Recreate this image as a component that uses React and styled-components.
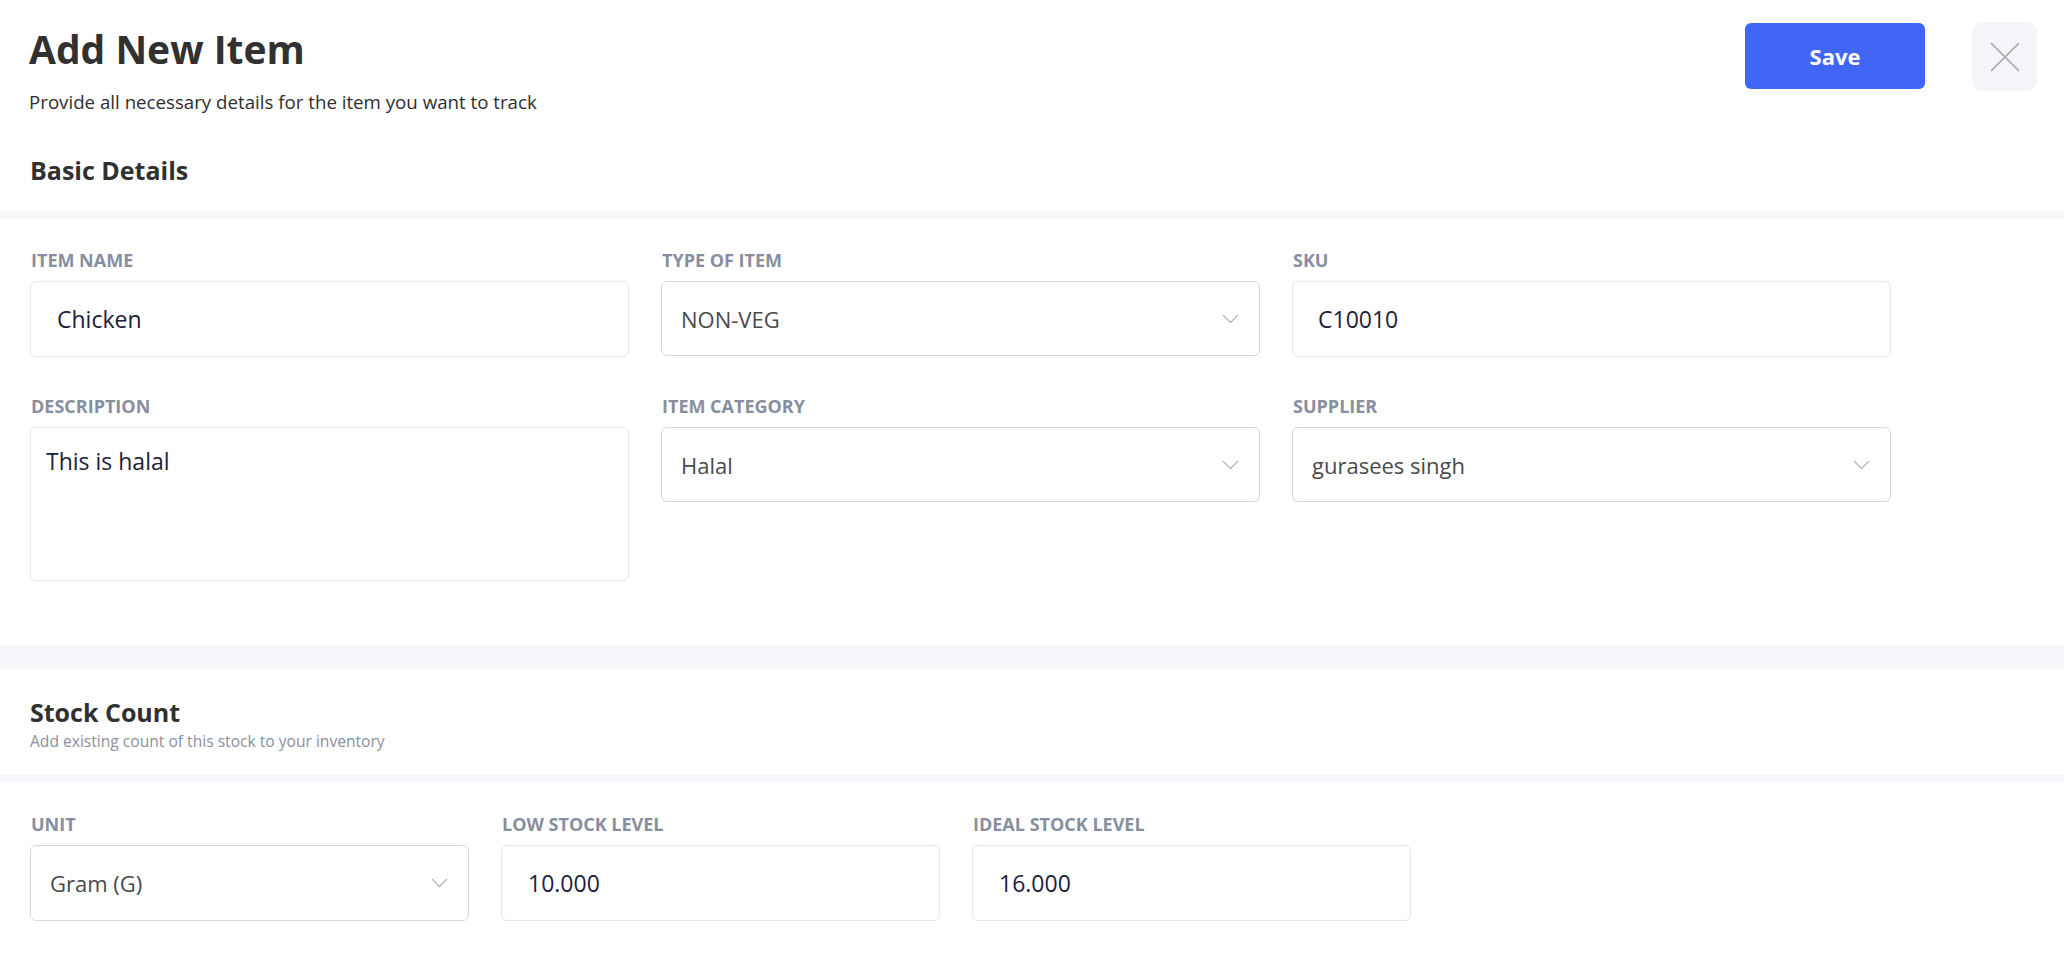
import React from 'react'
import styled, { createGlobalStyle } from 'styled-components'

const GlobalStyle = createGlobalStyle`
  * { box-sizing: border-box; }
  html, body {
    margin: 0;
    padding: 0;
    background: #fff;
    font-family: "Open Sans", "Liberation Sans", sans-serif;
  }
`

const Page = styled.div`
  width: 100%;
  min-height: 968px;
  background: #fff;
`

const Top = styled.div`
  padding: 22px 27px 25px 29px;
`

const Header = styled.div`
  display: flex;
  justify-content: space-between;
  align-items: flex-start;
`

const Title = styled.h1`
  margin: 3px 0 0;
  font-size: 39px;
  line-height: 48px;
  font-weight: 700;
  color: #313131;
`

const Subtitle = styled.p`
  margin: 17px 0 0;
  font-size: 18.7px;
  line-height: 24px;
  color: #2f2f2f;
`

const Actions = styled.div`
  display: flex;
  align-items: flex-start;
  gap: 47px;
`

const SaveButton = styled.button`
  width: 180px;
  height: 66px;
  margin-top: 1px;
  border: none;
  border-radius: 6px;
  background: #4166f5;
  color: #fff;
  font-family: inherit;
  font-size: 22px;
  font-weight: 700;
  cursor: pointer;
`

const CloseButton = styled.button`
  width: 65px;
  height: 69px;
  border: none;
  border-radius: 10px;
  background: #f4f5f8;
  display: flex;
  align-items: center;
  justify-content: center;
  cursor: pointer;
`

const SectionTitle = styled.h2`
  margin: ${p => p.spaced ? '40px' : '0'} 0 0 1px;
  font-size: 25px;
  line-height: 32px;
  font-weight: 700;
  color: #303030;
`

const SectionHint = styled.p`
  margin: 3px 0 0 1px;
  font-size: 15.6px;
  line-height: 20px;
  color: #8a90a0;
`

const Band = styled.div`
  height: ${p => p.size}px;
  background: #f7f8fb;
`

const Block = styled.div`
  padding: ${p => p.pad};
`

const FieldGrid = styled.div`
  display: grid;
  grid-template-columns: repeat(3, ${p => p.col}px);
  column-gap: 32px;
  row-gap: 37px;
  align-items: start;
`

const Field = styled.div`
  display: flex;
  flex-direction: column;
`

const Label = styled.label`
  margin: 0 0 9px 1px;
  font-size: 18px;
  line-height: 24px;
  font-weight: 700;
  color: #878e9f;
  text-transform: uppercase;
`

const TextInput = styled.input`
  width: 100%;
  height: 76px;
  padding: 0 ${p => p.inset || 26}px;
  border: 1.5px solid #e3e7f0;
  border-radius: 6px;
  background: #fff;
  font-family: inherit;
  font-size: 23px;
  color: #1c213a;
  outline: none;
`

const TextArea = styled.textarea`
  width: 100%;
  height: 154px;
  padding: 18px 15px;
  border: 1.5px solid #e3e7f0;
  border-radius: 6px;
  font-family: inherit;
  font-size: 23px;
  line-height: 30px;
  color: #1c213a;
  resize: none;
  outline: none;
`

const SelectBox = styled.div`
  height: ${p => p.tall ? 76 : 75}px;
  padding: 0 20px 0 19px;
  border: 1.5px solid #d6d8dd;
  border-radius: 6px;
  display: flex;
  align-items: center;
  justify-content: space-between;
  font-size: 22px;
  color: #4a4a4a;
  cursor: pointer;
`

const Chevron = () => (
  <svg width="17" height="10" viewBox="0 0 17 10" fill="none">
    <path d="M1 1 L8.5 8.5 L16 1" stroke="#b3b6bc" strokeWidth="1.3" />
  </svg>
)

const Select = ({ value, tall }) => (
  <SelectBox tall={tall}>
    <span>{value}</span>
    <Chevron />
  </SelectBox>
)

export default function App() {
  return (
    <Page>
      <GlobalStyle />
      <Top>
        <Header>
          <div>
            <Title>Add New Item</Title>
            <Subtitle>Provide all necessary details for the item you want to track</Subtitle>
          </div>
          <Actions>
            <SaveButton>Save</SaveButton>
            <CloseButton aria-label="close">
              <svg width="30" height="30" viewBox="0 0 30 30">
                <path d="M1 1 L29 29 M29 1 L1 29" stroke="#a2a5ad" strokeWidth="1.6" />
              </svg>
            </CloseButton>
          </Actions>
        </Header>
        <SectionTitle spaced>Basic Details</SectionTitle>
      </Top>
      <Band size={8} />

      <Block pad="29px 30px 64px">
        <FieldGrid col={599}>
          <Field>
            <Label>Item Name</Label>
            <TextInput defaultValue="Chicken" inset={26} />
          </Field>
          <Field>
            <Label>Type of Item</Label>
            <Select value="NON-VEG" />
          </Field>
          <Field>
            <Label>SKU</Label>
            <TextInput defaultValue="C10010" inset={25} />
          </Field>
          <Field>
            <Label>Description</Label>
            <TextArea defaultValue="This is halal" />
          </Field>
          <Field>
            <Label>Item Category</Label>
            <Select value="Halal" />
          </Field>
          <Field>
            <Label>Supplier</Label>
            <Select value="gurasees singh" />
          </Field>
        </FieldGrid>
      </Block>
      <Band size={24} />

      <Block pad="27px 30px 24px 29px">
        <SectionTitle>Stock Count</SectionTitle>
        <SectionHint>Add existing count of this stock to your inventory</SectionHint>
      </Block>
      <Band size={8} />

      <Block pad="29px 30px 48px">
        <FieldGrid col={439}>
          <Field>
            <Label>Unit</Label>
            <Select value="Gram (G)" tall />
          </Field>
          <Field>
            <Label>Low Stock Level</Label>
            <TextInput defaultValue="10.000" inset={26} />
          </Field>
          <Field>
            <Label>Ideal Stock Level</Label>
            <TextInput defaultValue="16.000" inset={26} />
          </Field>
        </FieldGrid>
      </Block>
    </Page>
  )
}
